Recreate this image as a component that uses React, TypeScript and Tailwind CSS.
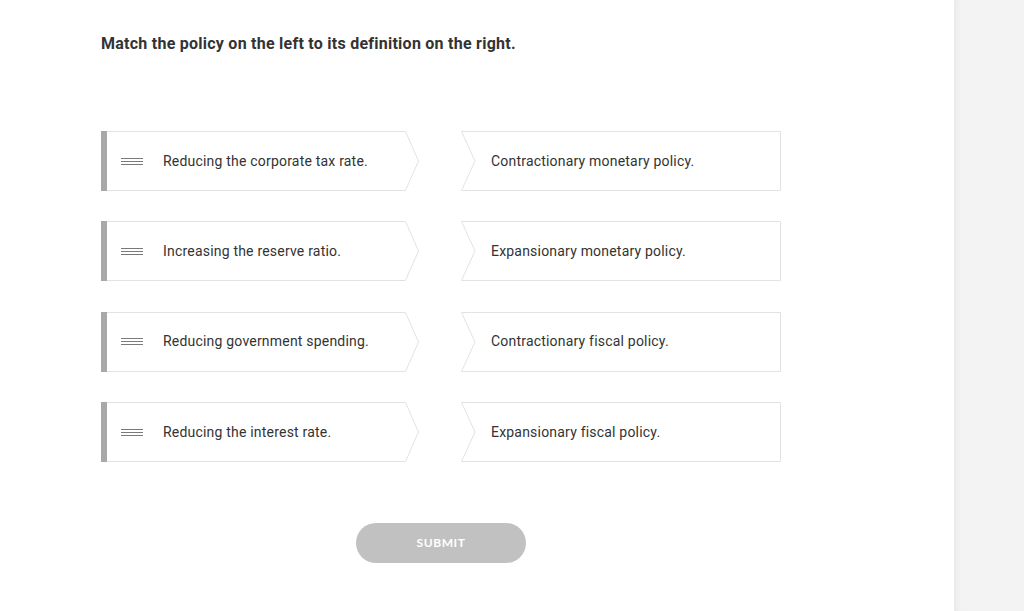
import React from "react";

const lefts = [
  "Reducing the corporate tax rate.",
  "Increasing the reserve ratio.",
  "Reducing government spending.",
  "Reducing the interest rate.",
];
const rights = [
  "Contractionary monetary policy.",
  "Expansionary monetary policy.",
  "Contractionary fiscal policy.",
  "Expansionary fiscal policy.",
];

function LeftCard({ text }: { text: string }) {
  return (
    <div className="relative w-[318px] h-[60px]">
      <svg className="absolute inset-0" width="318" height="60" viewBox="0 0 318 60">
        <polygon
          points="0.5,0.5 304.5,0.5 317.5,30 304.5,59.5 0.5,59.5"
          fill="#ffffff"
          stroke="#e2e2e2"
          strokeWidth="1"
        />
      </svg>
      <div className="relative flex h-full items-center">
        <div className="h-full w-[6px] bg-[#a8a8a8]" />
        <div className="ml-[14px] flex w-[22px] flex-col gap-[2px]">
          <div className="h-px bg-[#7a7a7a]" />
          <div className="h-px bg-[#7a7a7a]" />
          <div className="h-px bg-[#7a7a7a]" />
        </div>
        <span className="ml-[20px] text-[14px] tracking-[0.2px] text-[#333333]">{text}</span>
      </div>
    </div>
  );
}

function RightCard({ text }: { text: string }) {
  return (
    <div className="relative w-[320px] h-[60px]">
      <svg className="absolute inset-0" width="320" height="60" viewBox="0 0 320 60">
        <polygon
          points="0.5,0.5 319.5,0.5 319.5,59.5 0.5,59.5 14,30"
          fill="#ffffff"
          stroke="#e2e2e2"
          strokeWidth="1"
        />
      </svg>
      <div className="relative flex h-full items-center pl-[30px]">
        <span className="text-[14px] tracking-[0.2px] text-[#333333]">{text}</span>
      </div>
    </div>
  );
}

export default function App() {
  return (
    <div
      className="flex h-[611px] w-full bg-white"
      style={{ fontFamily: "Roboto, 'Liberation Sans', sans-serif" }}
    >
      <main className="flex-1 pl-[101px] pt-[32px]">
        <h1 className="text-[16px] font-bold leading-[24px] tracking-[0.25px] text-[#333333]">
          Match the policy on the left to its definition on the right.
        </h1>
        <div className="mt-[75px] flex gap-[42px]">
          <div className="flex flex-col gap-[30.4px]">
            {lefts.map((t) => (
              <LeftCard key={t} text={t} />
            ))}
          </div>
          <div className="flex flex-col gap-[30.4px]">
            {rights.map((t) => (
              <RightCard key={t} text={t} />
            ))}
          </div>
        </div>
        <div className="mt-[61px] pl-[255px]">
          <button
            className="flex h-[40px] w-[170px] items-center justify-center rounded-full bg-[#c1c1c1] text-[12px] font-bold tracking-[0.6px] text-white"
            style={{ fontFamily: "Lato, 'Open Sans', sans-serif" }}
          >
            SUBMIT
          </button>
        </div>
      </main>
      <aside className="w-[70px] bg-[#f3f3f3] shadow-[inset_6px_0_8px_-6px_rgba(0,0,0,0.08)]" />
    </div>
  );
}
